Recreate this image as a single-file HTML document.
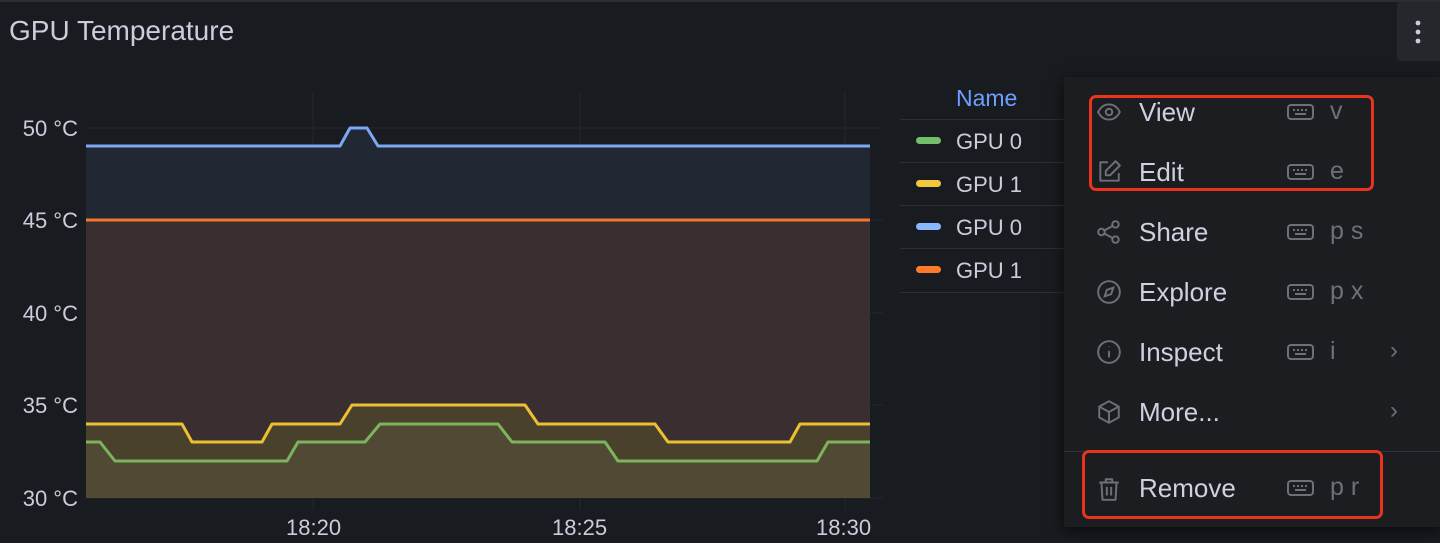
<!DOCTYPE html>
<html><head><meta charset="utf-8"><style>
*{margin:0;padding:0;box-sizing:border-box}
body{width:1440px;height:543px;background:#181b1f;overflow:hidden;position:relative;font-family:"Liberation Sans",sans-serif;color:#ccccdc}
.abs{position:absolute}
.title{left:9px;top:15px;font-size:28px;color:#ccccdc}
.yl{position:absolute;right:1362px;font-size:22px;color:#ccccdc;white-space:nowrap}
.xl{position:absolute;top:515px;font-size:22px;color:#ccccdc}
.leg{position:absolute;left:900px;width:164px;height:1px;background:#2c2f34}
.sw{position:absolute;left:916px;width:25px;height:7px;border-radius:4px}
.lt{position:absolute;left:956px;font-size:22px;color:#ccccdc}
.menu{left:1064px;top:77px;width:376px;height:450px;background:#1b1d21;box-shadow:0 4px 14px rgba(0,0,0,.6)}
.it{position:absolute;left:1139px;font-size:26px;color:#d0d1e0}
.ic{position:absolute;left:1096px;width:26px;height:26px}
.kb{position:absolute;left:1287px;width:27px;height:16px}
.sc{position:absolute;left:1330px;font-size:25px;color:#6e7079}
.ch{position:absolute;left:1390px;font-size:24px;color:#6e7079}
.red{position:absolute;border:3px solid #e8341c;border-radius:7px}
</style></head><body>
<div class="abs" style="left:0;top:0;width:1440px;height:2px;background:#2a2d32"></div>
<div class="abs title">GPU Temperature</div>
<div class="abs" style="left:1397px;top:2px;width:43px;height:59px;background:#25272c;border-radius:4px 0 0 4px"></div>
<svg class="abs" style="left:1412px;top:18px" width="12" height="28"><circle cx="6" cy="5" r="2.4" fill="#ccccdc"/><circle cx="6" cy="14" r="2.4" fill="#ccccdc"/><circle cx="6" cy="23" r="2.4" fill="#ccccdc"/></svg>

<svg class="abs" style="left:0;top:0" width="900" height="543">
<g stroke="#24272b" stroke-width="1">
<line x1="86" y1="128" x2="883" y2="128"/><line x1="86" y1="220" x2="883" y2="220"/><line x1="86" y1="313" x2="883" y2="313"/><line x1="86" y1="405" x2="883" y2="405"/><line x1="86" y1="498" x2="883" y2="498"/>
<line x1="313" y1="92" x2="313" y2="510"/><line x1="580" y1="92" x2="580" y2="510"/><line x1="845" y1="92" x2="845" y2="510"/>
</g>
<path d="M86 146 L340 146 L350 128 L367 128 L378 146 L870 146 L870 498 L86 498Z" fill="#222734"/>
<path d="M86 220 L870 220 L870 498 L86 498Z" fill="#3a2f30"/>
<path d="M86 424 L182 424 L192 442 L262 442 L272 424 L340 424 L352 405 L525 405 L538 424 L655 424 L668 442 L790 442 L800 424 L870 424 L870 498 L86 498Z" fill="#4a412c"/>
<path d="M86 442 L100 442 L115 461 L287 461 L298 442 L365 442 L380 424 L498 424 L512 442 L605 442 L618 461 L817 461 L828 442 L870 442 L870 498 L86 498Z" fill="#504a34"/>
<g fill="none" stroke-width="3" stroke-linejoin="round">
<path d="M86 146 L340 146 L350 128 L367 128 L378 146 L870 146" stroke="#7aa8f5"/>
<path d="M86 220 L870 220" stroke="#f0782c"/>
<path d="M86 424 L182 424 L192 442 L262 442 L272 424 L340 424 L352 405 L525 405 L538 424 L655 424 L668 442 L790 442 L800 424 L870 424" stroke="#ecc032"/>
<path d="M86 442 L100 442 L115 461 L287 461 L298 442 L365 442 L380 424 L498 424 L512 442 L605 442 L618 461 L817 461 L828 442 L870 442" stroke="#7cb35c"/>
</g>
</svg>
<div class="yl" style="top:116px">50 °C</div>
<div class="yl" style="top:208px">45 °C</div>
<div class="yl" style="top:301px">40 °C</div>
<div class="yl" style="top:393px">35 °C</div>
<div class="yl" style="top:486px">30 °C</div>
<div class="xl" style="left:286px">18:20</div>
<div class="xl" style="left:552px">18:25</div>
<div class="xl" style="left:816px">18:30</div>

<div class="abs" style="left:956px;top:85px;font-size:23px;color:#6e9fff">Name</div>
<div class="leg" style="top:119px"></div><div class="leg" style="top:162px"></div><div class="leg" style="top:205px"></div><div class="leg" style="top:248px"></div><div class="leg" style="top:292px"></div>
<div class="sw" style="top:137px;background:#73bf69"></div><div class="lt" style="top:129px">GPU 0</div>
<div class="sw" style="top:180px;background:#f2c83b"></div><div class="lt" style="top:172px">GPU 1</div>
<div class="sw" style="top:223px;background:#8ab8ff"></div><div class="lt" style="top:215px">GPU 0</div>
<div class="sw" style="top:266px;background:#ff7a2b"></div><div class="lt" style="top:258px">GPU 1</div>

<div class="abs menu"></div>
<div class="abs" style="left:1064px;top:451px;width:376px;height:1px;background:#2f3237"></div>

<svg class="ic" style="top:99px" viewBox="0 0 24 24" fill="none" stroke="#6e7079" stroke-width="1.8"><path d="M2 12C4.5 7 8 5 12 5s7.5 2 10 7c-2.5 5-6 7-10 7s-7.5-2-10-7z"/><circle cx="12" cy="12" r="3"/></svg>
<svg class="ic" style="top:159px" viewBox="0 0 24 24" fill="none" stroke="#6e7079" stroke-width="1.8" stroke-linejoin="round"><path d="M11 3H4v17h17v-7"/><path d="M18 2l4 4-9 9H9v-4z"/></svg>
<svg class="ic" style="top:219px" viewBox="0 0 24 24" fill="none" stroke="#6e7079" stroke-width="1.8"><circle cx="18" cy="5" r="3"/><circle cx="5" cy="12" r="3"/><circle cx="18" cy="19" r="3"/><path d="M7.6 10.6l7.8-4.2M7.6 13.4l7.8 4.2"/></svg>
<svg class="ic" style="top:279px" viewBox="0 0 24 24" fill="none" stroke="#6e7079" stroke-width="1.8"><circle cx="12" cy="12" r="10"/><path d="M16 8l-2 6-6 2 2-6z"/></svg>
<svg class="ic" style="top:339px" viewBox="0 0 24 24" fill="none" stroke="#6e7079" stroke-width="1.8"><circle cx="12" cy="12" r="10"/><path d="M12 11v6M12 7v.5"/></svg>
<svg class="ic" style="top:399px" viewBox="0 0 24 24" fill="none" stroke="#6e7079" stroke-width="1.8" stroke-linejoin="round"><path d="M12 2l9 5v10l-9 5-9-5V7z"/><path d="M3 7l9 5 9-5M12 12v10"/></svg>
<svg class="ic" style="top:476px" viewBox="0 0 24 24" fill="none" stroke="#6e7079" stroke-width="1.8" stroke-linejoin="round"><path d="M3 6h18M9 6V3h6v3M5 6l1 16h12l1-16M10 10v8M14 10v8"/></svg>

<div class="it" style="top:97px">View</div>
<div class="it" style="top:157px">Edit</div>
<div class="it" style="top:217px">Share</div>
<div class="it" style="top:277px">Explore</div>
<div class="it" style="top:337px">Inspect</div>
<div class="it" style="top:397px">More...</div>
<div class="it" style="top:473px">Remove</div>

<svg width="0" height="0" style="position:absolute"><defs><g id="k"><rect x="1" y="1" width="25" height="14" rx="3" fill="none" stroke="#6e7079" stroke-width="2"/><path d="M6 6h2M10 6h2M14 6h2M18 6h2M8 10h11" stroke="#6e7079" stroke-width="2"/></g></defs></svg>
<svg class="kb" style="top:104px"><use href="#k"/></svg>
<svg class="kb" style="top:164px"><use href="#k"/></svg>
<svg class="kb" style="top:224px"><use href="#k"/></svg>
<svg class="kb" style="top:284px"><use href="#k"/></svg>
<svg class="kb" style="top:344px"><use href="#k"/></svg>
<svg class="kb" style="top:480px"><use href="#k"/></svg>
<div class="sc" style="top:97px">v</div>
<div class="sc" style="top:157px">e</div>
<div class="sc" style="top:217px">p s</div>
<div class="sc" style="top:277px">p x</div>
<div class="sc" style="top:337px">i</div>
<div class="sc" style="top:473px">p r</div>
<div class="ch" style="top:337px">›</div>
<div class="ch" style="top:397px">›</div>

<div class="red" style="left:1089px;top:95px;width:285px;height:96px"></div>
<div class="red" style="left:1082px;top:450px;width:301px;height:69px"></div>
</body></html>
